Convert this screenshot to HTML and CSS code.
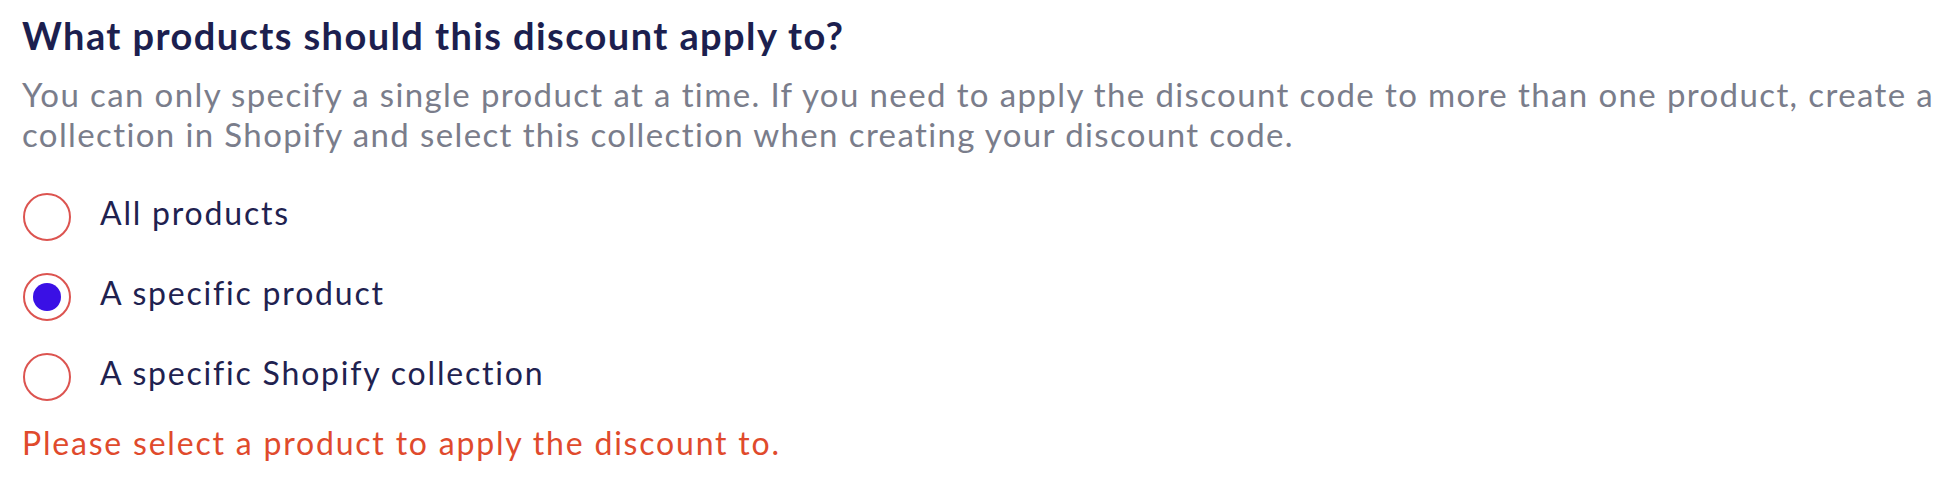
FILE: index.html
```html
<!DOCTYPE html>
<html lang="en">
<head>
    <meta charset="UTF-8">
    <meta name="viewport" content="width=device-width, initial-scale=1.0">
    <title>Discount products</title>
    <link rel="stylesheet" href="styles.css">
</head>
<body>
    <main class="question">
        <h2 class="question-title">What products should this discount apply to?</h2>
        <p class="question-help">You can only specify a single product at a time. If you need to apply the discount code to more than one product, create a collection in Shopify and select this collection when creating your discount code.</p>

        <div class="options">
            <label class="option">
                <input type="radio" name="applies" value="all">
                <span>All products</span>
            </label>
            <label class="option">
                <input type="radio" name="applies" value="product" checked>
                <span>A specific product</span>
            </label>
            <label class="option">
                <input type="radio" name="applies" value="collection">
                <span>A specific Shopify collection</span>
            </label>
        </div>

        <p class="error">Please select a product to apply the discount to.</p>
    </main>
</body>
</html>
```

FILE: styles.css
```css
* {
    margin: 0;
    padding: 0;
    box-sizing: border-box;
}

body {
    font-family: Lato, "Open Sans", sans-serif;
    background-color: #ffffff;
    color: #1f2250;
}

.question {
    padding: 12px 4px 12px 22px;
}

.question-title {
    font-size: 38px;
    line-height: 46px;
    font-weight: 700;
    letter-spacing: 1.4px;
    color: #1c1f4f;
}

.question-help {
    margin-top: 16px;
    font-size: 33px;
    line-height: 40px;
    letter-spacing: 1.38px;
    color: #7a7d8b;
}

/* radio list */
.options {
    margin-top: 39px;
    display: flex;
    flex-direction: column;
    gap: 32px;
}

.option {
    display: flex;
    align-items: flex-start;
    gap: 29px;
    cursor: pointer;
}

.option input {
    appearance: none;
    -webkit-appearance: none;
    flex: none;
    width: 48px;
    height: 48px;
    margin-left: 1px;
    border: 2px solid #dc5450;
    border-radius: 50%;
    display: flex;
    align-items: center;
    justify-content: center;
    cursor: pointer;
}

.option input:checked::after {
    content: "";
    width: 28px;
    height: 28px;
    border-radius: 50%;
    background-color: #3a10e5;
}

.option span {
    font-size: 32px;
    line-height: 40px;
    letter-spacing: 1.8px;
    color: #1f2250;
}

.error {
    margin-top: 22px;
    font-size: 32px;
    line-height: 40px;
    letter-spacing: 1.8px;
    color: #e04a2c;
}
```
